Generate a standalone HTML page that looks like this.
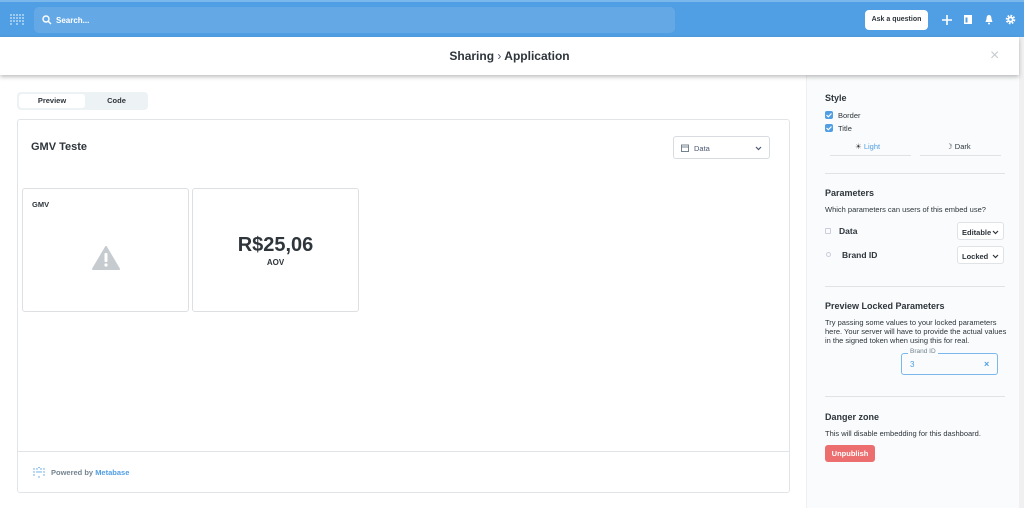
<!DOCTYPE html>
<html><head><meta charset="utf-8"><style>
*{box-sizing:border-box;margin:0;padding:0}
body{width:1024px;height:508px;overflow:hidden;font-family:"Liberation Sans",sans-serif;background:#fff;color:#2e353b;position:relative}
.top{position:absolute;left:0;top:0;width:1024px;height:37px;background:#509ee3;border-top:2px solid #7ab8ec}
.search{position:absolute;left:34px;top:5px;width:641px;height:26px;background:#64a9e6;border-radius:5px;color:#fff;font-size:8px;font-weight:bold;padding:9px 0 0 22px}
.ask{position:absolute;left:865px;top:8px;width:63px;height:20px;background:#fff;border-radius:4px;font-size:7px;font-weight:bold;color:#2e353b;text-align:center;line-height:20px}
.hdr{position:absolute;left:0;top:37px;width:1019px;height:38px;background:#fff;box-shadow:0 2px 4px rgba(0,0,0,.25);z-index:2;text-align:center;font-size:12px;font-weight:bold;line-height:38px}
.side{position:absolute;left:806px;top:75px;width:213px;height:433px;background:#f9fbfc;border-left:1px solid #eef0f2}
.scroll{position:absolute;left:1019px;top:37px;width:5px;height:471px;background:#f0f0f0}
.side h4{position:absolute;left:18px;font-size:9px;font-weight:bold}
.side p{position:absolute;left:18px;font-size:7.5px;line-height:9px;color:#2e353b;white-space:nowrap}
.sep{position:absolute;left:18px;width:180px;height:1px;background:#dfe3e6}
.cb{position:absolute;left:18px;width:8px;height:8px;background:#509ee3;border-radius:2px}
.sel{position:absolute;left:150px;width:47px;height:18px;background:#fff;border:1px solid #dfe3e6;border-radius:3px;font-size:7.5px;font-weight:bold;padding:5px 0 0 4px}
.sel svg{position:absolute;right:4px;top:7px}
.tabs{position:absolute;left:17px;top:92px;width:131px;height:18px;background:#edf2f5;border-radius:4px}
.card{position:absolute;left:17px;top:119px;width:773px;height:374px;border:1px solid #e2e5e8;border-radius:3px}
.tile{position:absolute;top:188px;width:167px;height:124px;border:1px solid #dde0e3;border-radius:3px;background:#fff}
</style></head><body>
<div class="top">
<svg style="position:absolute;left:10px;top:11px" width="14" height="14"><g fill="#d8e9f8"><circle cx="1" cy="2" r=".9"/><circle cx="1" cy="5" r=".9"/><circle cx="1" cy="8" r=".9"/><circle cx="1" cy="11" r=".9"/><circle cx="4" cy="2" r=".9"/><circle cx="4" cy="5" r=".9"/><circle cx="4" cy="8" r=".9"/><circle cx="7" cy="2" r=".9"/><circle cx="7" cy="5" r=".9"/><circle cx="7" cy="8" r=".9"/><circle cx="7" cy="11" r=".9"/><circle cx="10" cy="2" r=".9"/><circle cx="10" cy="5" r=".9"/><circle cx="10" cy="8" r=".9"/><circle cx="13" cy="2" r=".9"/><circle cx="13" cy="5" r=".9"/><circle cx="13" cy="8" r=".9"/><circle cx="13" cy="11" r=".9"/></g></svg>
<div class="search">Search...</div>
<svg style="position:absolute;left:42px;top:13px" width="10" height="10"><circle cx="4" cy="4" r="3" stroke="#fff" stroke-width="1.4" fill="none"/><path d="M6.2 6.2L9 9" stroke="#fff" stroke-width="1.4"/></svg>
<div class="ask">Ask a question</div>
<svg style="position:absolute;left:942px;top:13px" width="10" height="10"><path d="M5 0v10M0 5h10" stroke="#fff" stroke-width="1.6"/></svg>
<svg style="position:absolute;left:963px;top:12px" width="10" height="11"><rect x="1" y="1" width="8" height="9" fill="#fff"/><rect x="2.5" y="3.5" width="2" height="5" fill="#509ee3"/></svg>
<svg style="position:absolute;left:984px;top:12px" width="10" height="11"><path d="M5 1C3 1 2.5 3 2.5 5L1.5 8h7L7.5 5C7.5 3 7 1 5 1z" fill="#fff"/><circle cx="5" cy="9.5" r="1" fill="#fff"/></svg>
<svg style="position:absolute;left:1005px;top:12px" width="11" height="11"><circle cx="5.5" cy="5.5" r="3.6" fill="none" stroke="#fff" stroke-width="2.4" stroke-dasharray="1.6 1.2"/><circle cx="5.5" cy="5.5" r="3" fill="#fff"/><circle cx="5.5" cy="5.5" r="1.3" fill="#509ee3"/></svg>
</div>
<div class="hdr">Sharing <span style="font-weight:normal;color:#4c5773">&#8250;</span> Application
<span style="position:absolute;left:990px;top:0;color:#c6cbd0;font-weight:normal;font-size:16px">×</span></div>
<div class="scroll"></div>

<div class="tabs"><div style="position:absolute;left:2px;top:2px;width:66px;height:14px;background:#fff;border-radius:3px"></div>
<div style="position:absolute;left:2px;width:66px;top:4px;text-align:center;font-size:7.5px;font-weight:bold">Preview</div>
<div style="position:absolute;left:68px;width:63px;top:4px;text-align:center;font-size:7.5px;font-weight:bold">Code</div></div>
<div class="card">
<div style="position:absolute;left:13px;top:21px;font-size:11px;font-weight:bold">GMV Teste</div>
<div style="position:absolute;left:655px;top:16px;width:97px;height:23px;border:1px solid #d8dce0;border-radius:3px;font-size:7.5px;padding:7px 0 0 20px;color:#4c5773">Data
<svg style="position:absolute;left:7px;top:7px" width="8" height="8"><rect x=".5" y="1" width="7" height="6.5" fill="none" stroke="#74838f"/><path d="M.5 3h7" stroke="#74838f"/></svg>
<svg style="position:absolute;left:81px;top:9px" width="7" height="5"><path d="M1 1l2.5 2.5L6 1" stroke="#4c5773" fill="none" stroke-width="1.2"/></svg></div>
<div style="position:absolute;left:0;top:331px;width:771px;height:1px;background:#e2e5e8"></div>
<svg style="position:absolute;left:15px;top:347px" width="12" height="12"><g fill="#509ee3"><circle cx="1" cy="2" r=".7"/><circle cx="1" cy="5" r=".7"/><circle cx="1" cy="8" r=".7"/><circle cx="4" cy="2" r=".7"/><circle cx="4" cy="5" r=".7"/><circle cx="6" cy="0.5" r=".7"/><circle cx="6" cy="5" r=".7"/><circle cx="6" cy="10" r=".7"/><circle cx="8" cy="2" r=".7"/><circle cx="8" cy="5" r=".7"/><circle cx="11" cy="2" r=".7"/><circle cx="11" cy="5" r=".7"/><circle cx="11" cy="8" r=".7"/></g></svg>
<div style="position:absolute;left:33px;top:348px;font-size:7.5px;font-weight:bold;color:#74838f">Powered by <span style="color:#509ee3">Metabase</span></div>
</div>
<div class="tile" style="left:22px"><div style="position:absolute;left:9px;top:11px;font-size:7.5px;font-weight:bold">GMV</div>
<svg style="position:absolute;left:69px;top:57px" width="28" height="24"><path d="M14 1L27 23H1z" fill="#c6cbd0" stroke="#c6cbd0" stroke-linejoin="round" stroke-width="2"/><rect x="12.5" y="7" width="3" height="9" rx="1" fill="#fff"/><circle cx="14" cy="19" r="1.6" fill="#fff"/></svg></div>
<div class="tile" style="left:192px"><div style="position:absolute;left:0;width:100%;top:45px;text-align:center;font-size:20px;font-weight:bold">R$25,06</div>
<div style="position:absolute;left:0;width:100%;top:69px;text-align:center;font-size:8px;font-weight:bold">AOV</div></div>

<div class="side">
<h4 style="top:18px">Style</h4>
<div class="cb" style="top:36px"><svg width="8" height="8" style="position:absolute;left:0;top:0"><path d="M1.5 4l1.8 1.8L6.5 2.5" stroke="#fff" fill="none" stroke-width="1.2"/></svg></div><p style="left:31px;top:36px">Border</p>
<div class="cb" style="top:49px"><svg width="8" height="8" style="position:absolute;left:0;top:0"><path d="M1.5 4l1.8 1.8L6.5 2.5" stroke="#fff" fill="none" stroke-width="1.2"/></svg></div><p style="left:31px;top:49px">Title</p>
<div style="position:absolute;left:23px;top:80px;width:81px;height:1px;background:#dfe3e6"></div>
<div style="position:absolute;left:113px;top:80px;width:81px;height:1px;background:#dfe3e6"></div>
<p style="left:48px;top:67px">☀ <span style="color:#509ee3">Light</span></p><p style="left:139px;top:67px">☽ Dark</p>
<div class="sep" style="top:98px"></div>
<h4 style="top:113px">Parameters</h4>
<p style="top:130px">Which parameters can users of this embed use?</p>
<p style="left:32px;top:152px;font-size:8.5px;font-weight:bold">Data</p>
<div style="position:absolute;left:18px;top:153px;width:6px;height:6px;border:1px solid #ccd;border-radius:1px"></div>
<div class="sel" style="top:147px">Editable<svg width="7" height="5"><path d="M1 1l2.5 2.5L6 1" stroke="#2e353b" fill="none" stroke-width="1.2"/></svg></div>
<p style="left:35px;top:176px;font-size:8.5px;font-weight:bold">Brand ID</p>
<div style="position:absolute;left:19px;top:177px;width:5px;height:5px;border:1px solid #ccd;border-radius:50%"></div>
<div class="sel" style="top:171px">Locked<svg width="7" height="5"><path d="M1 1l2.5 2.5L6 1" stroke="#2e353b" fill="none" stroke-width="1.2"/></svg></div>
<div class="sep" style="top:211px"></div>
<h4 style="top:226px">Preview Locked Parameters</h4>
<p style="top:243px">Try passing some values to your locked parameters<br>here. Your server will have to provide the actual values<br>in the signed token when using this for real.</p>
<div style="position:absolute;left:94px;top:278px;width:97px;height:22px;border:1.5px solid #7ab8ec;border-radius:3px;background:#f9fbfc">
<span style="position:absolute;left:6px;top:-6px;background:#f9fbfc;padding:0 2px;font-size:6.5px;color:#74838f">Brand ID</span>
<span style="position:absolute;left:8px;top:6px;font-size:8px;color:#509ee3">3</span>
<span style="position:absolute;left:82px;top:5px;font-size:9px;color:#509ee3;font-weight:bold">×</span></div>
<div class="sep" style="top:321px"></div>
<h4 style="top:337px">Danger zone</h4>
<p style="top:354px">This will disable embedding for this dashboard.</p>
<div style="position:absolute;left:18px;top:370px;width:50px;height:17px;background:#ed6e6e;border-radius:3px;color:#fff;font-size:7.5px;font-weight:bold;text-align:center;line-height:17px">Unpublish</div>
</div>
</body></html>
